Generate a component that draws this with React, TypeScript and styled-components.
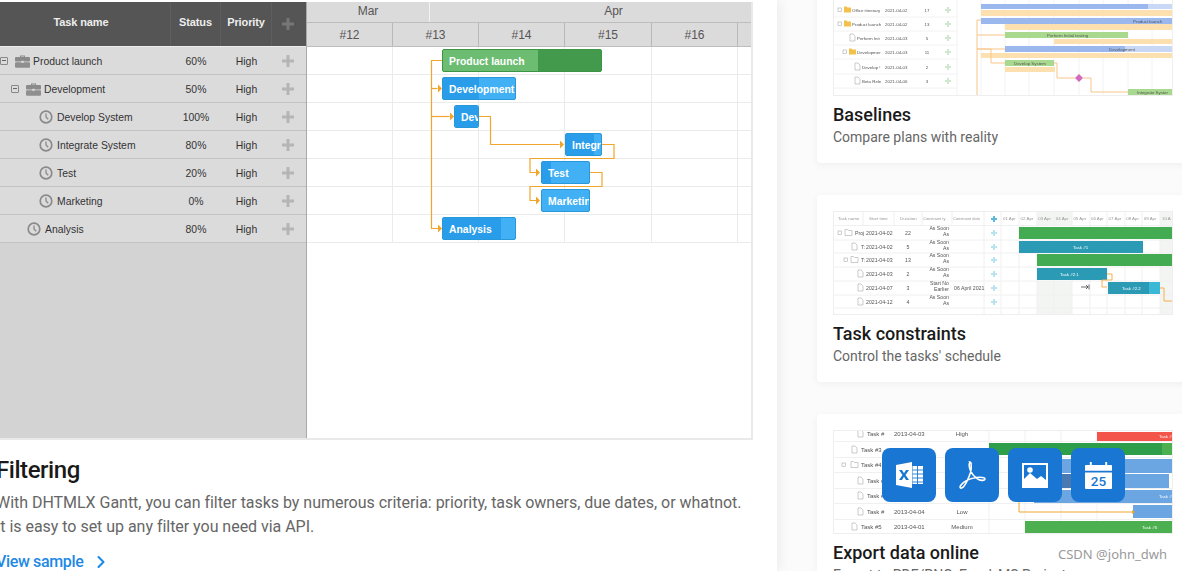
import React from 'react'
import styled, { createGlobalStyle } from 'styled-components'
import { ChevronRight } from 'lucide-react'

const GlobalStyle = createGlobalStyle`
html, body {
  margin: 0;
  padding: 0;
  height: 571px;
  overflow: hidden;
  background: #fbfbfb;
  font-family: Roboto, "Liberation Sans", sans-serif;
}
`

interface TaskRow {
  name: string
  status: string
  indent: number
  kind: 'project' | 'task'
}

const rows: TaskRow[] = [
  { name: 'Product launch', status: '60%', indent: 0, kind: 'project' },
  { name: 'Development', status: '50%', indent: 12, kind: 'project' },
  { name: 'Develop System', status: '100%', indent: 24, kind: 'task' },
  { name: 'Integrate System', status: '80%', indent: 24, kind: 'task' },
  { name: 'Test', status: '20%', indent: 24, kind: 'task' },
  { name: 'Marketing', status: '0%', indent: 24, kind: 'task' },
  { name: 'Analysis', status: '80%', indent: 12, kind: 'task' }
]

const weeks = [
  { label: '#12', width: 86 },
  { label: '#13', width: 86 },
  { label: '#14', width: 86 },
  { label: '#15', width: 87 },
  { label: '#16', width: 86 },
  { label: '', width: 13 }
]

const bars = [
  { label: 'Product launch', left: 135, top: 2, width: 160, progress: 60, green: true },
  { label: 'Development', left: 135, top: 30, width: 74, progress: 50 },
  { label: 'Develop System', left: 147, top: 58, width: 25, progress: 100 },
  { label: 'Integrate System', left: 258, top: 86, width: 37, progress: 80 },
  { label: 'Test', left: 234, top: 114, width: 49, progress: 20 },
  { label: 'Marketing', left: 234, top: 142, width: 49, progress: 0 },
  { label: 'Analysis', left: 135, top: 170, width: 74, progress: 80 }
]

const Page = styled.div`
  display: flex;
  height: 571px;
  overflow: hidden;
`

const MainCard = styled.main`
  width: 777px;
  height: 571px;
  flex: none;
  background: #fff;
  box-shadow: 2px 0 12px rgba(0, 0, 0, 0.07);
  padding-top: 2px;
  box-sizing: border-box;
  overflow: hidden;
`

const GanttBox = styled.div`
  width: 753px;
  height: 438px;
  display: flex;
  box-sizing: border-box;
  border-right: 2px solid #e9e9e9;
  border-bottom: 2px solid #e9e9e9;
  font-family: "Liberation Sans", Arial, sans-serif;
`

const GridPane = styled.div`
  width: 307px;
  flex: none;
  background: #d3d3d3;
  border-right: 1px solid #a9a9a9;
  box-sizing: border-box;
`

const GridHeader = styled.div`
  height: 44px;
  display: grid;
  grid-template-columns: 171px 50px 51px 34px;
  background: #555;
  color: #eee;
  font-size: 11px;
  font-weight: 700;
  letter-spacing: -0.1px;
  align-items: center;
  text-align: center;
  border-bottom: 1px solid #eee;
  box-sizing: content-box;
`

const HeaderCell = styled.div<{ $pad?: number }>`
  height: 44px;
  line-height: 41px;
  padding-right: ${props => props.$pad || 0}px;
  border-right: 1px solid #5e5e5e;
  box-sizing: border-box;
`

const GridRow = styled.div`
  height: 28px;
  display: grid;
  grid-template-columns: 171px 50px 51px 34px;
  align-items: center;
  padding-top: 1px;
  background: #dcdbdc;
  border-bottom: 1px solid #c2c2c2;
  box-sizing: border-box;
  color: #333;
  font-size: 10.4px;
`

const NameCell = styled.div<{ $indent: number }>`
  display: flex;
  align-items: center;
  padding-left: ${props => props.$indent - 1}px;
  white-space: nowrap;
`

const CenterCell = styled.div`
  text-align: center;
`

const Toggle = styled.span`
  width: 8px;
  height: 8px;
  flex: none;
  box-sizing: border-box;
  border: 1px solid #888;
  border-radius: 1px;
  margin: 0 6px 0 0;
  position: relative;
  &::after {
    content: '';
    position: absolute;
    left: 1px;
    right: 1px;
    top: 2px;
    height: 1px;
    background: #666;
  }
`

const TaskIconWrap = styled.span<{ $gap: number; $lead: number }>`
  display: flex;
  flex: none;
  margin-left: ${props => props.$lead}px;
  margin-right: ${props => props.$gap}px;
`

const AddCell = styled.div`
  display: flex;
  justify-content: center;
  padding-right: 2px;
`

const Plus = ({ color }: { color: string }) => (
  <svg width='12' height='12' viewBox='0 0 12 12'>
    <path d='M4.5 0h3v4.5H12v3H7.5V12h-3V7.5H0v-3h4.5z' fill={color} />
  </svg>
)

const Briefcase = () => (
  <svg width='15' height='13' viewBox='0 0 15 13'>
    <path d='M5 2V.6h5V2h-1V1.6H6V2z' fill='#8a8a8a' />
    <rect x='0' y='2' width='15' height='4.6' rx='1' fill='#8a8a8a' />
    <rect x='0' y='7.2' width='15' height='5.6' rx='1' fill='#8f8f8f' />
    <rect x='6.2' y='5.8' width='2.6' height='2' fill='#d8d8d8' />
  </svg>
)

const Clock = () => (
  <svg width='14' height='14' viewBox='0 0 14 14' fill='none' stroke='#8a8a8a'>
    <circle cx='7' cy='7' r='5.8' strokeWidth='1.7' />
    <path d='M7 3.4V7l2.2 2.3' strokeWidth='1.3' />
  </svg>
)

const Timeline = styled.div`
  flex: 1;
  min-width: 0;
  display: flex;
  flex-direction: column;
`

const MonthRow = styled.div`
  height: 21px;
  flex: none;
  display: flex;
  box-sizing: border-box;
  background: #dcdbdc;
  border-bottom: 1px solid #bdbdbd;
  color: #555;
  font-size: 12px;
  line-height: 18px;
  text-align: center;
`

const Month = styled.div<{ $width?: number }>`
  ${props => props.$width
    ? `width: ${props.$width}px; flex: none; border-right: 1px solid #f2f2f2;`
    : 'flex: 1; padding-left: 46px;'}
`

const WeekRow = styled.div`
  height: 24px;
  flex: none;
  display: flex;
  background: #dcdbdc;
  border-bottom: 1px solid #bdbdbd;
  box-sizing: border-box;
  color: #555;
  font-size: 12px;
  line-height: 24px;
  text-align: center;
`

const Week = styled.div<{ $width: number }>`
  width: ${props => props.$width}px;
  flex: none;
  box-sizing: border-box;
  border-right: 1px solid #b8b8b8;
  &:last-child {
    border-right: none;
  }
`

const ChartArea = styled.div`
  position: relative;
  flex: 1;
`

const ChartRow = styled.div`
  height: 28px;
  display: flex;
  box-sizing: border-box;
  border-bottom: 1px solid #ebebeb;
`

const ChartCell = styled.div<{ $width: number }>`
  width: ${props => props.$width}px;
  flex: none;
  box-sizing: border-box;
  border-right: 1px solid #ebebeb;
  &:last-child {
    border-right: none;
  }
`

const Bar = styled.div<{ $green?: boolean }>`
  position: absolute;
  height: 23px;
  box-sizing: border-box;
  border: 1px solid ${props => props.$green ? '#3c9445' : '#2898d8'};
  border-radius: 2px;
  background: ${props => props.$green ? '#449a4c' : '#42b0f5'};
  overflow: hidden;
`

const BarProgress = styled.div<{ $green?: boolean }>`
  height: 100%;
  background: ${props => props.$green ? '#6cbd72' : '#299cea'};
`

const BarLabel = styled.span`
  position: absolute;
  left: 6px;
  top: 0;
  line-height: 23px;
  color: #fff;
  font-size: 10.4px;
  font-weight: 700;
  white-space: nowrap;
`

const Links = styled.svg`
  position: absolute;
  left: 0;
  top: 0;
  pointer-events: none;
`

const Arrow = ({ x, y }: { x: number; y: number }) => (
  <path d={`M${x} ${y - 4}l4 4l-4 4z`} fill='#f0a62c' />
)

const GanttLinks = () => (
  <Links width='445' height='200' viewBox='0 0 445 200'>
    <g fill='none' stroke='#f0a62c' strokeWidth='1.2'>
      <path d='M135 13.5h-10.5v168h10' />
      <path d='M124.5 41.5h6' />
      <path d='M124.5 69.5h18' />
      <path d='M172 69.5h11.5v28h69' />
      <path d='M295 97.5h12v14h-84v14h6' />
      <path d='M283 125.5h12v14h-72v14h6' />
    </g>
    <Arrow x={131} y={41.5} />
    <Arrow x={143} y={69.5} />
    <Arrow x={253} y={97.5} />
    <Arrow x={229} y={125.5} />
    <Arrow x={229} y={153.5} />
    <Arrow x={131} y={181.5} />
  </Links>
)

const Content = styled.section`
  margin-left: -4px;
  padding-top: 15px;
`

const Heading = styled.h2`
  margin: 0;
  font-size: 24px;
  line-height: 30px;
  font-weight: 500;
  letter-spacing: -0.45px;
  color: #1a1a1a;
`

const Description = styled.p`
  margin: 6px 0 0;
  font-size: 16px;
  line-height: 24px;
  letter-spacing: -0.03px;
  color: #666;
  white-space: nowrap;
`

const SampleLink = styled.a`
  display: flex;
  align-items: center;
  gap: 8px;
  margin-top: 11px;
  font-size: 16px;
  line-height: 24px;
  font-weight: 500;
  letter-spacing: -0.35px;
  color: #1e88e5;
`

const Sidebar = styled.aside`
  margin: -24px 0 0 40px;
  width: 380px;
  flex: none;
  display: flex;
  flex-direction: column;
  gap: 32px;
`

const Card = styled.article`
  height: 187px;
  flex: none;
  box-sizing: border-box;
  padding: 16px 0 0 16px;
  background: #fff;
  border-radius: 4px;
  box-shadow: 0 2px 8px rgba(0, 0, 0, 0.05);
`

const Thumb = styled.div`
  position: relative;
  width: 340px;
  height: 104px;
  overflow: hidden;
  box-sizing: border-box;
  border: 1px solid #eee;
  background: #fff;
`

const ThumbArt = styled.svg`
  display: block;
  filter: blur(0.35px);
`

const CardTitle = styled.h3`
  margin: 8px 0 0;
  font-size: 18px;
  line-height: 22px;
  font-weight: 500;
  color: #1a1a1a;
`

const CardText = styled.p`
  margin: 1px 0 0;
  font-size: 14px;
  line-height: 20px;
  color: #666;
  white-space: nowrap;
`

const ExportIcons = styled.div`
  position: absolute;
  left: 48px;
  top: 17px;
  display: flex;
  gap: 9px;
`

const ExportTile = styled.div`
  width: 54px;
  height: 54px;
  border-radius: 8px;
  background: #1976d2;
  display: flex;
  align-items: center;
  justify-content: center;
`

const Watermark = styled.div`
  position: absolute;
  left: 1058px;
  top: 546px;
  font-size: 13px;
  line-height: 16px;
  color: #9a9a9a;
  font-family: "Noto Sans", sans-serif;
`

const tiny = { fontFamily: 'Liberation Sans, sans-serif', fontSize: 4.4 }
const small = { fontFamily: 'Liberation Sans, sans-serif', fontSize: 5.2 }
const medium = { fontFamily: 'Liberation Sans, sans-serif', fontSize: 6 }

const Doc = ({ x, y }: { x: number; y: number }) => (
  <path d={`M${x} ${y - 4}h3l2 2v5h-5z`} fill='none' stroke='#aaa' strokeWidth='.6' />
)

const Folder = ({ x, y, color }: { x: number; y: number; color: string }) => (
  <path d={`M${x} ${y - 3.500}h2.500l1 1h3.500v5h-7z`} fill={color} stroke={color === 'none' ? '#aaa' : 'none'} strokeWidth='.6' />
)

const TreeToggle = ({ x, y }: { x: number; y: number }) => (
  <rect x={x} y={y - 2} width='3.500' height='3.500' fill='#fff' stroke='#999' strokeWidth='.5' />
)

const baselineRows = [
  { name: 'Office itinerary', date: '2021-04-02', days: '17', x: 19, y: 10, project: true, toggle: 5 },
  { name: 'Product launch', date: '2021-04-02', days: '13', x: 19, y: 24, project: true, toggle: 5 },
  { name: 'Perform Init', date: '2021-04-03', days: '5', x: 24, y: 38, project: false, toggle: 0 },
  { name: 'Developmer', date: '2021-04-03', days: '11', x: 24, y: 52, project: true, toggle: 10 },
  { name: 'Develop !', date: '2021-04-03', days: '2', x: 29, y: 67, project: false, toggle: 0 },
  { name: 'Beta Rele', date: '2021-04-06', days: '3', x: 29, y: 81, project: false, toggle: 0 }
]

const BaselinesArt = () => (
  <ThumbArt width='338' height='102' viewBox='0 0 338 102'>
    <g transform='translate(-1 7)'>
      <path d='M0 -5.500h340M0 17h124M0 31h124M0 45h124M0 59h124M0 74h124M0 88h124M124 -8v104M148 -8v104M172 -8v104M196 -8v104M221 -8v104M246 -8v104M270 -8v104M295 -8v104M319 -8v104' stroke='#f2f2f2' />
      <g fill='#555' style={tiny}>
        {baselineRows.map(row => (
          <g key={row.name}>
            {row.toggle > 0 && <TreeToggle x={row.toggle} y={row.y} />}
            {row.project
              ? <Folder x={row.x - 8} y={row.y} color='#f3c14b' />
              : <Doc x={row.x - 7} y={row.y} />}
            <text x={row.x} y={row.y + 1.500}>{row.name}</text>
            <text x='52' y={row.y + 1.500}>{row.date}</text>
            <text x='94' y={row.y + 1.500} textAnchor='middle'>{row.days}</text>
            <path d={`M114 ${row.y - 3}h2v2h2v2h-2v2h-2v-2h-2v-2h2z`} fill='#cfe8cf' />
          </g>
        ))}
      </g>
      <rect x='148' y='4' width='191' height='5' fill='#c8d8f5' />
      <rect x='148' y='4' width='167' height='5' fill='#9ab8ee' />
      <rect x='148' y='10' width='191' height='6' fill='#fde0b0' />
      <rect x='148' y='18' width='191' height='6' fill='#9ab8ee' />
      <rect x='172' y='24' width='167' height='6' fill='#fde0b0' />
      <rect x='172' y='32' width='123' height='6' fill='#a9d98f' />
      <rect x='221' y='39' width='118' height='5' fill='#fde0b0' />
      <rect x='172' y='46' width='167' height='6' fill='#9ab8ee' />
      <rect x='292' y='46' width='47' height='6' fill='#c8d8f5' />
      <rect x='148' y='53' width='191' height='5' fill='#fde0b0' />
      <rect x='172' y='60' width='49' height='6' fill='#a9d98f' />
      <rect x='172' y='67' width='50' height='5' fill='#fde0b0' />
      <rect x='295' y='89' width='44' height='6' fill='#a9d98f' />
      <path d='M246 74l4 4-4 4-4-4z' fill='#d46ac0' />
      <g fill='none' stroke='#f9c58a'>
        <path d='M148 20h-4v76M144 49h28M144 49h14v14h14M221 63h3v15h18M250 78h8v14h37M144 35h28' />
      </g>
      <g fill='#555' style={tiny}>
        <text x='300' y='22.500'>Product launch</text>
        <text x='214' y='36.500'>Perform Initial testing</text>
        <text x='276' y='50.500'>Development</text>
        <text x='181' y='64.500'>Develop System</text>
        <text x='304' y='93.500'>Integrate Syster</text>
      </g>
    </g>
  </ThumbArt>
)

const constraintRows = [
  { name: 'Proj', date: '2021-04-02', days: '22', y: 21, top: 'As Soon', low: 'As', nameX: 21 },
  { name: 'T:', date: '2021-04-02', days: '5', y: 35, top: 'As Soon', low: 'As', nameX: 27 },
  { name: 'T:', date: '2021-04-03', days: '13', y: 48, top: 'As Soon', low: 'As', nameX: 27 },
  { name: '', date: '2021-04-03', days: '2', y: 62, top: 'As Soon', low: 'As', nameX: 27 },
  { name: '', date: '2021-04-07', days: '3', y: 76, top: 'Start No', low: 'Earlier', nameX: 27 },
  { name: '', date: '2021-04-12', days: '4', y: 90, top: 'As Soon', low: 'As', nameX: 27 }
]

const ConstraintsArt = () => (
  <ThumbArt width='338' height='102' viewBox='0 0 338 102'>
    <rect x='203' y='0' width='35' height='13' fill='#f3f5f2' />
    <rect x='203' y='69' width='35' height='33' fill='#f3f5f2' />
    <rect x='326' y='0' width='12' height='102' fill='#f3f5f2' />
    <path d='M0 13.500h338M0 28h338M0 41h338M0 55h338M0 69h338M0 83h338M0 96h338M29 0v13M60 0v13M88 0v13M118 0v13M150 0v102M167 0v102M185 0v102M203 0v102M220 0v102M238 0v102M256 0v102M273 0v102M291 0v102M308 0v102M326 0v102' stroke='#f0f0f0' />
    <g fill='#999' style={tiny}>
      <text x='4' y='8'>Task name</text>
      <text x='35' y='8'>Start time</text>
      <text x='66' y='8'>Duration</text>
      <text x='89' y='8' fontSize='4'>Constraint ty</text>
      <text x='119' y='8' fontSize='4'>Constraint date</text>
      {['01', '02', '03', '04', '05', '06', '07', '08', '09'].map((d, i) => (
        <text key={d} x={169 + i * 17.6} y='8'>{d} Apr</text>
      ))}
      <text x='328' y='8'>10 A</text>
    </g>
    <g fill='#555' style={small}>
      {constraintRows.map(row => (
        <g key={row.y}>
          <text x={row.nameX} y={row.y + 2}>{row.name}</text>
          <text x='32' y={row.y + 2}>{row.date}</text>
          <text x='74' y={row.y + 2} textAnchor='middle'>{row.days}</text>
          <text x='115' y={row.y - 3} textAnchor='end'>{row.top}</text>
          <text x='115' y={row.y + 3} textAnchor='end'>{row.low}</text>
          <path d={`M159 ${row.y - 3}h2v2h2v2h-2v2h-2v-2h-2v-2h2z`} fill='#b9e3ee' />
        </g>
      ))}
      <text x='120' y='78'>06 April 2021</text>
    </g>
    <TreeToggle x={4} y={21} />
    <Folder x={11} y={21} color='none' />
    <Doc x={18} y={35} />
    <TreeToggle x={10} y={48} />
    <Folder x={17} y={48} color='none' />
    <Doc x={24} y={62} />
    <Doc x={24} y={76} />
    <Doc x={24} y={90} />
    <path d='M159 4h2v2h2v2h-2v2h-2v-2h-2v-2h2z' fill='#5bbbd8' />
    <rect x='185' y='15' width='153' height='12' fill='#43ac52' />
    <rect x='185' y='29' width='124' height='12' fill='#2a9ab5' />
    <rect x='203' y='42' width='135' height='12' fill='#43ac52' />
    <rect x='203' y='56' width='70' height='12' fill='#2a9ab5' />
    <rect x='274' y='70' width='52' height='12' fill='#3ab8d6' />
    <rect x='274' y='70' width='41' height='12' fill='#2a9ab5' />
    <path d='M273 62h5v6h-10v7h5M326 76h4v13h8' fill='none' stroke='#f5b04c' />
    <path d='M247 75h7m-2-2l2 2-2 2M255 72.500v5' fill='none' stroke='#444' strokeWidth='.8' />
    <g fill='#fff' style={tiny}>
      <text x='239' y='37'>Task #1</text>
      <text x='226' y='64'>Task #2.1</text>
      <text x='288' y='78'>Task #2.2</text>
    </g>
  </ThumbArt>
)

const exportRows = [
  { name: 'Task #', date: '2013-04-03', level: 'High', x: 33, y: 3 },
  { name: 'Task #3', date: '', level: '', x: 27, y: 19 },
  { name: 'Task #4', date: '', level: '', x: 27, y: 34 },
  { name: 'Task #', date: '', level: '', x: 33, y: 50 },
  { name: 'Task #', date: '', level: '', x: 33, y: 65 },
  { name: 'Task #', date: '2013-04-04', level: 'Low', x: 33, y: 81 },
  { name: 'Task #5', date: '2013-04-01', level: 'Medium', x: 27, y: 96 }
]

const ExportArt = () => (
  <ThumbArt width='338' height='102' viewBox='0 0 338 102'>
    <path d='M0 10.500h338M0 26.500h338M0 41.500h338M0 57.500h338M0 72.500h338M0 88.500h338M155 0v102M191 0v102M227 0v102M263 0v102' stroke='#f0f0f0' />
    <g fill='#555' style={medium}>
      {exportRows.map(row => (
        <g key={row.y}>
          {row.y !== 34 && <Doc x={row.x - 9} y={row.y} />}
          <text x={row.x} y={row.y + 2}>{row.name}</text>
          <text x='60' y={row.y + 2}>{row.date}</text>
          <text x='128' y={row.y + 2} textAnchor='middle'>{row.level}</text>
        </g>
      ))}
    </g>
    <TreeToggle x={8} y={34} />
    <Folder x={17} y={34} color='none' />
    <rect x='263' y='1' width='75' height='9' fill='#f4554a' />
    <rect x='155' y='12' width='183' height='12' fill='#2e9e4b' />
    <rect x='328' y='12' width='10' height='12' fill='#4caf50' />
    <rect x='200' y='28' width='138' height='14' fill='#6ba6e3' />
    <rect x='200' y='43' width='135' height='14' fill='#6ba6e3' />
    <rect x='200' y='43' width='70' height='14' fill='#4a78b0' />
    <rect x='200' y='59' width='138' height='13' fill='#6ba6e3' />
    <rect x='299' y='74' width='39' height='13' fill='#6ba6e3' />
    <rect x='191' y='90' width='147' height='12' fill='#4caf50' />
    <path d='M185 68v13h113' fill='none' stroke='#f0a62c' />
    <path d='M298 79l3 2-3 2z' fill='#f0a62c' />
    <g fill='#fff' style={tiny}>
      <text x='325' y='7'>Task #</text>
      <text x='325' y='67'>Task #</text>
      <text x='308' y='98'>Task #5</text>
    </g>
  </ThumbArt>
)

const ExcelIcon = () => (
  <svg width='27' height='26' viewBox='0 0 27 26'>
    <path d='M0 3L16 0v26L0 23z' fill='#fff' />
    <path d='M16.500 4H27v18H16.500z' fill='#fff' />
    <path d='M16.500 8h10.500M16.500 12h10.500M16.500 16h10.500M16.500 20h10.500M21.500 4v18' stroke='#1976d2' strokeWidth='.9' />
    <path d='M3 8h3l2 3.300L10 8h3l-3.500 5 3.500 5h-3l-2-3.300L6 18H3l3.500-5z' fill='#1976d2' />
  </svg>
)

const PdfIcon = () => (
  <svg width='28' height='28' viewBox='0 0 28 28' fill='none' stroke='#fff' strokeWidth='1.600'>
    <path d='M12.500 1.500c-1.500 0-1.500 2-1 5 1 5 5 10 9 12 3 1.500 6.500 1 6.500-.5s-4-2-9-1.500c-6 1-12 4-15 7.500-1.500 2-1 3.500.5 3 3-1 7-9 9-15.500 1-4 1-10.500-.5-10.500z' />
  </svg>
)

const ImageIcon = () => (
  <svg width='26' height='25' viewBox='0 0 26 25'>
    <path fillRule='evenodd' d='M0 0h26v25H0zM2 2v14l6-6 7 6 4-3 5 4V2z' fill='#fff' />
    <circle cx='8' cy='7' r='2.800' fill='#fff' />
  </svg>
)

const CalendarIcon = () => (
  <svg width='27' height='27' viewBox='0 0 28 28'>
    <path d='M1 3h26a1 1 0 0 1 1 1v5H0V4a1 1 0 0 1 1-1z' fill='#fff' />
    <path d='M0 11h28v16a1 1 0 0 1-1 1H1a1 1 0 0 1-1-1z' fill='#fff' />
    <path d='M6 0v5M22 0v5' stroke='#fff' strokeWidth='2' />
    <text x='14' y='25' textAnchor='middle' fill='#1976d2' fontSize='14' fontWeight='500' fontFamily='Roboto, sans-serif'>25</text>
  </svg>
)

const App = () => (
  <>
    <GlobalStyle />
    <Page>
      <MainCard>
        <GanttBox>
          <GridPane>
            <GridHeader>
              <HeaderCell $pad={8}>Task name</HeaderCell>
              <HeaderCell>Status</HeaderCell>
              <HeaderCell>Priority</HeaderCell>
              <AddCell><Plus color='#777' /></AddCell>
            </GridHeader>
            {rows.map(row => (
              <GridRow key={row.name}>
                <NameCell $indent={row.indent}>
                  {row.kind === 'project' && <Toggle />}
                  <TaskIconWrap $lead={row.kind === 'project' ? 1 : 16} $gap={row.kind === 'project' ? 3 : 4}>
                    {row.kind === 'project' ? <Briefcase /> : <Clock />}
                  </TaskIconWrap>
                  {row.name}
                </NameCell>
                <CenterCell>{row.status}</CenterCell>
                <CenterCell>High</CenterCell>
                <AddCell><Plus color='#b5b5b5' /></AddCell>
              </GridRow>
            ))}
          </GridPane>
          <Timeline>
            <MonthRow>
              <Month $width={122}>Mar</Month>
              <Month>Apr</Month>
            </MonthRow>
            <WeekRow>
              {weeks.map((week, i) => <Week key={i} $width={week.width}>{week.label}</Week>)}
            </WeekRow>
            <ChartArea>
              {rows.map(row => (
                <ChartRow key={row.name}>
                  {weeks.map((week, i) => <ChartCell key={i} $width={week.width} />)}
                </ChartRow>
              ))}
              <GanttLinks />
              {bars.map(bar => (
                <Bar key={bar.label} $green={bar.green} style={{ left: bar.left, top: bar.top, width: bar.width }}>
                  <BarProgress $green={bar.green} style={{ width: `${bar.progress}%` }} />
                  <BarLabel>{bar.label}</BarLabel>
                </Bar>
              ))}
            </ChartArea>
          </Timeline>
        </GanttBox>
        <Content>
          <Heading>Filtering</Heading>
          <Description>
            With DHTMLX Gantt, you can filter tasks by numerous criteria: priority, task owners, due dates, or whatnot.
            <br />
            It is easy to set up any filter you need via API.
          </Description>
          <SampleLink>View sample <ChevronRight size={20} strokeWidth={2.5} /></SampleLink>
        </Content>
      </MainCard>
      <Sidebar>
        <Card>
          <Thumb><BaselinesArt /></Thumb>
          <CardTitle>Baselines</CardTitle>
          <CardText>Compare plans with reality</CardText>
        </Card>
        <Card>
          <Thumb><ConstraintsArt /></Thumb>
          <CardTitle>Task constraints</CardTitle>
          <CardText>Control the tasks' schedule</CardText>
        </Card>
        <Card>
          <Thumb>
            <ExportArt />
            <ExportIcons>
              <ExportTile><ExcelIcon /></ExportTile>
              <ExportTile><PdfIcon /></ExportTile>
              <ExportTile><ImageIcon /></ExportTile>
              <ExportTile><CalendarIcon /></ExportTile>
            </ExportIcons>
          </Thumb>
          <CardTitle>Export data online</CardTitle>
          <CardText>Export to PDF/PNG, Excel, MS Project</CardText>
        </Card>
      </Sidebar>
      <Watermark>CSDN @john_dwh</Watermark>
    </Page>
  </>
)

export default App
